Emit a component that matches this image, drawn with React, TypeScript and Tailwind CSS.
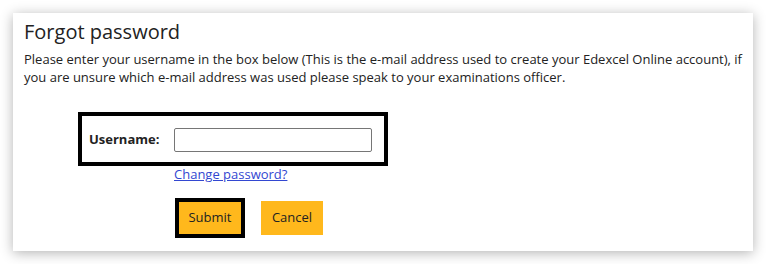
const ForgotPassword = () => {
  return (
    <div className="min-h-screen bg-white pt-[13px] pl-[13px]">
      <div
        className="w-[740px] h-[238px] bg-white pt-[7px] pl-[11px] pr-[6px] shadow-[0_2px_12px_rgba(0,0,0,0.3)] text-[#222]"
        style={{ fontFamily: '"Open Sans", sans-serif' }}
      >
        {/* Heading */}
        <h2 className="text-[20px] leading-[24px] font-normal">Forgot password</h2>
        <p className="text-[13px] leading-[18px] mt-[6px]">
          Please enter your username in the box below (This is the e-mail address used to create your Edexcel
          Online account), if you are unsure which e-mail address was used please speak to your examinations officer.
        </p>

        {/* Username field */}
        <div className="ml-[54px] mt-[26px] w-[310px] h-[54px] border-4 border-black flex items-center pl-[7px] pt-[2px]">
          <label className="w-[85px] text-[13px] font-bold">Username:</label>
          <input
            type="text"
            className="w-[198px] h-[24px] border border-[#767676] rounded-[2px] bg-white"
          />
        </div>

        <a href="#" className="block w-fit ml-[150px] text-[13px] leading-[16px] text-[#3347d1] underline">
          Change password?
        </a>

        {/* Actions */}
        <div className="ml-[151px] mt-[16px] flex items-center">
          <button className="w-[70px] h-[40px] border-4 border-black bg-[#ffb81c] text-[13px] text-[#222]">
            Submit
          </button>
          <button className="ml-4 w-[62px] h-[34px] bg-[#ffb81c] text-[13px] text-[#222]">Cancel</button>
        </div>
      </div>
    </div>
  );
};

export default function App() {
  return <ForgotPassword />;
}
